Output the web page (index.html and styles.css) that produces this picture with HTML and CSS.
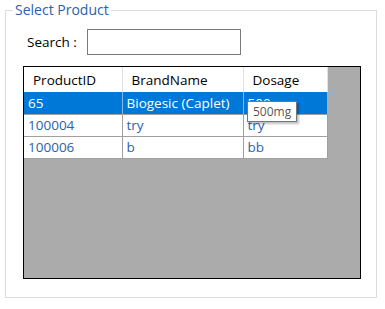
FILE: index.html
```html
<!DOCTYPE html>
<html>
<head>
<meta charset="utf-8">
<link rel="stylesheet" href="styles.css">
</head>
<body>
<fieldset class="group">
  <legend class="group-title">Select Product</legend>
  <div class="search-row">
    <label class="search-label" for="q">Search :</label>
    <input class="search-input" id="q" type="text">
  </div>
  <div class="grid">
    <table class="grid-table">
      <colgroup>
        <col class="c1"><col class="c2"><col class="c3">
      </colgroup>
      <thead>
        <tr><th>ProductID</th><th>BrandName</th><th>Dosage</th></tr>
      </thead>
      <tbody>
        <tr class="selected"><td>65</td><td>Biogesic (Caplet)</td><td>500mg</td></tr>
        <tr><td>100004</td><td>try</td><td>try</td></tr>
        <tr><td>100006</td><td>b</td><td>bb</td></tr>
      </tbody>
    </table>
    <div class="tooltip">500mg</div>
  </div>
</fieldset>
</body>
</html>
```

FILE: styles.css
```css
html, body {
  margin: 0;
  padding: 0;
  background: #ffffff;
}
body {
  font-family: "Open Sans", "Noto Sans", sans-serif;
  font-size: 13.5px;
  color: #000;
}
.group {
  box-sizing: border-box;
  margin: 0 0 0 5px;
  width: 372px;
  height: 298px;
  padding: 0 0 0 17px;
  border: 1px solid #dcdcdc;
}
.group-title {
  margin-left: -10px;
  padding: 0 2px;
  line-height: 20px;
  font-size: 14px;
  color: #2a62ad;
}
.search-row {
  display: flex;
  align-items: center;
  gap: 10px;
  margin-top: 9px;
  height: 26px;
}
.search-label {
  margin-left: 4px;
  color: #000;
}
.search-input {
  box-sizing: border-box;
  width: 154px;
  height: 26px;
  margin: 0;
  border: 1px solid #7a7a7a;
  padding: 0 4px;
  font: inherit;
  outline: none;
}
.grid {
  position: relative;
  box-sizing: border-box;
  margin-top: 11px;
  width: 338px;
  height: 213px;
  border: 1px solid #000;
  background: #ababab;
}
.grid-table {
  border-collapse: collapse;
  table-layout: fixed;
  width: 303px;
}
.c1 { width: 98px; }
.c2 { width: 121px; }
.c3 { width: 84px; }
.grid-table th {
  box-sizing: border-box;
  height: 25px;
  padding: 0 0 0 9px;
  text-align: left;
  font-weight: normal;
  background: #fff;
  border-right: 1px solid #e3e3e3;
  white-space: nowrap;
  overflow: hidden;
}
.grid-table td {
  box-sizing: border-box;
  height: 22px;
  padding: 0 0 0 4px;
  background: #fff;
  color: #2a62ad;
  border-right: 1px solid #a0a0a0;
  border-bottom: 1px solid #a0a0a0;
  white-space: nowrap;
  overflow: hidden;
}
.grid-table tr.selected td {
  background: #0078d7;
  color: #fff;
  border-right-color: #8ab8e6;
}
.tooltip {
  position: absolute;
  left: 223px;
  top: 34px;
  box-sizing: border-box;
  width: 50px;
  height: 21px;
  padding: 0 0 0 5px;
  line-height: 19px;
  font-size: 12px;
  color: #575757;
  background: #fff;
  border: 1px solid #767676;
  box-shadow: 2px 2px 2px rgba(0, 0, 0, 0.25);
}
```
